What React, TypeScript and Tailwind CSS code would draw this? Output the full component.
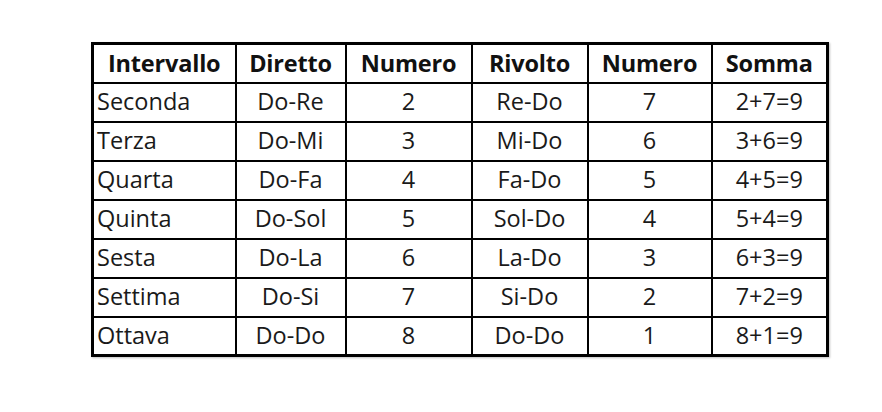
const header = ["Intervallo", "Diretto", "Numero", "Rivolto", "Numero", "Somma"];

const rows: string[][] = [
  ["Seconda", "Do-Re", "2", "Re-Do", "7", "2+7=9"],
  ["Terza", "Do-Mi", "3", "Mi-Do", "6", "3+6=9"],
  ["Quarta", "Do-Fa", "4", "Fa-Do", "5", "4+5=9"],
  ["Quinta", "Do-Sol", "5", "Sol-Do", "4", "5+4=9"],
  ["Sesta", "Do-La", "6", "La-Do", "3", "6+3=9"],
  ["Settima", "Do-Si", "7", "Si-Do", "2", "7+2=9"],
  ["Ottava", "Do-Do", "8", "Do-Do", "1", "8+1=9"],
];

export default function App() {
  return (
    <div className="min-h-[412px] w-full bg-white pl-[91px] pt-[42px] font-['Open_Sans',sans-serif] text-[#1a1a1a]">
      <table className="w-[735px] table-fixed border-collapse border-[3px] border-black text-[23.5px] leading-none shadow-[1px_1px_2px_rgba(0,0,0,0.25)]">
        <colgroup>
          <col className="w-[143px]" />
          <col className="w-[110px]" />
          <col className="w-[126px]" />
          <col className="w-[116px]" />
          <col className="w-[124px]" />
          <col className="w-[116px]" />
        </colgroup>
        <thead>
          <tr className="h-[39px]">
            {header.map((h, i) => (
              <th key={i} className="border-2 border-black p-0 text-center font-bold tracking-[-0.2px] text-[#111]">
                {h}
              </th>
            ))}
          </tr>
        </thead>
        <tbody>
          {rows.map((r) => (
            <tr key={r[0]} className="h-[39px]">
              {r.map((c, i) => (
                <td
                  key={i}
                  className={
                    i === 0
                      ? "border-2 border-black py-0 pl-[3px] pr-0 text-left"
                      : "border-2 border-black p-0 text-center"
                  }
                >
                  {c}
                </td>
              ))}
            </tr>
          ))}
        </tbody>
      </table>
    </div>
  );
}
